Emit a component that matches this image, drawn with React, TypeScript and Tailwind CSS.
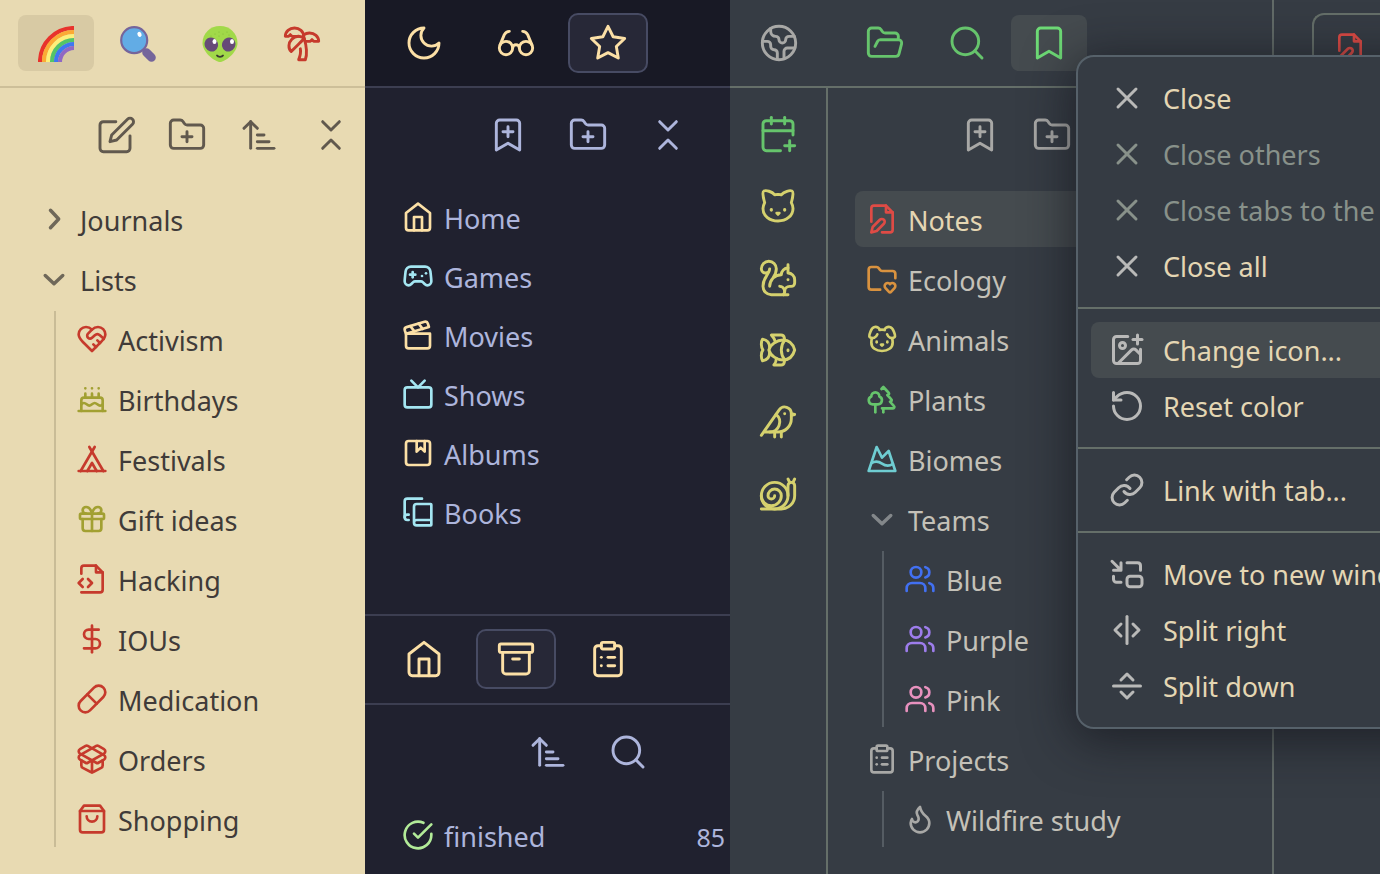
import type { ReactNode } from "react";
import {
  Album,
  Archive,
  ArrowUpNarrowWide,
  Bird,
  CalendarPlus,
  Cat,
  ChevronsDownUp,
  ClipboardList,
  DollarSign,
  Dog,
  Earth,
  Fish,
  FolderHeart,
  FolderOpen,
  FolderPlus,
  Gamepad2,
  Glasses,
  ImagePlus,
  Link,
  MountainSnow,
  PackageOpen,
  Pill,
  RotateCcw,
  SeparatorHorizontal,
  SeparatorVertical,
  Snail,
  Squirrel,
  Tent,
  TreePalm,
  Trees,
  Tv,
  X,
} from "lucide-react";

type IconProps = { className?: string; strokeWidth?: number };
type IconType = React.ComponentType<IconProps>;

function outline(children: ReactNode): IconType {
  return function OutlineIcon({ className, strokeWidth = 2 }: IconProps) {
    return (
      <svg
        viewBox="0 0 24 24"
        fill="none"
        stroke="currentColor"
        strokeWidth={strokeWidth}
        strokeLinecap="round"
        strokeLinejoin="round"
        aria-hidden="true"
        className={className}
      >
        {children}
      </svg>
    );
  };
}

const HeartShake = outline(
  <>
    <path d="M19 14c1.49-1.46 3-3.21 3-5.5A5.5 5.5 0 0 0 16.5 3c-1.76 0-3 .5-4.5 2-1.5-1.5-2.74-2-4.5-2A5.5 5.5 0 0 0 2 8.5c0 2.3 1.5 4.05 3 5.5l7 7Z" />
    <path d="M12 5 9.04 7.96a2.17 2.17 0 0 0 0 3.08c.82.82 2.13.85 3 .07l2.07-1.9a2.82 2.82 0 0 1 3.79 0l2.96 2.66" />
    <path d="m18 15-2-2" />
    <path d="m15 18-2-2" />
  </>,
);
const CakeIcon = outline(
  <>
    <path d="M20 21v-8a2 2 0 0 0-2-2H6a2 2 0 0 0-2 2v8" />
    <path d="M4 16s.5-1 2-1 2.500 2 4 2 2.500-2 4-2 2.500 2 4 2 2-1 2-1" />
    <path d="M2 21h20M7 8v3M12 8v3M17 8v3M7 4h.01M12 4h.01M17 4h.01" />
  </>,
);
const GiftIcon = outline(
  <>
    <rect x="3" y="8" width="18" height="4" rx="1" />
    <path d="M12 8v13" />
    <path d="M19 12v7a2 2 0 0 1-2 2H7a2 2 0 0 1-2-2v-7" />
    <path d="M7.500 8a2.500 2.500 0 0 1 0-5A4.800 8 0 0 1 12 8a4.800 8 0 0 1 4.500-5 2.500 2.500 0 0 1 0 5" />
  </>,
);
const FileCode = outline(
  <>
    <path d="M4 22h14a2 2 0 0 0 2-2V7l-5-5H6a2 2 0 0 0-2 2v4" />
    <path d="M15 2v5h5" />
    <path d="m5 12-3 3 3 3" />
    <path d="m9 18 3-3-3-3" />
  </>,
);
const FilePen = outline(
  <>
    <path d="M12 22h6a2 2 0 0 0 2-2V7l-5-5H6a2 2 0 0 0-2 2v10" />
    <path d="M15 2v5h5" />
    <path d="M10.400 12.600a2 2 0 1 1 3 3L8 21l-4 1 1-4Z" />
  </>,
);
const Bag = outline(
  <>
    <path d="M6 2 3 6v14a2 2 0 0 0 2 2h14a2 2 0 0 0 2-2V6l-3-4Z" />
    <path d="M3 6h18" />
    <path d="M16 10a4 4 0 0 1-8 0" />
  </>,
);
const EditIcon = outline(
  <>
    <path d="M12.500 4H5a2 2 0 0 0-2 2v14a2 2 0 0 0 2 2h14a2 2 0 0 0 2-2v-7.500" />
    <path d="M19.500 2.500a2.120 2.120 0 0 1 3 3L13 15l-4 1 1-4Z" />
  </>,
);
const Clapper = outline(
  <>
    <path d="M20.200 6 3 11l-.9-2.400c-.3-1.100.3-2.200 1.300-2.500l13.500-4c1.100-.3 2.200.3 2.500 1.300Z" />
    <path d="m6.200 5.300 3.100 3.900" />
    <path d="m12.400 3.400 3.100 4" />
    <path d="M3 11h18v9a2 2 0 0 1-2 2H5a2 2 0 0 1-2-2Z" />
  </>,
);
const MoonIcon = outline(<path d="M12 3a6 6 0 0 0 9 9 9 9 0 1 1-9-9Z" />);
const StarIcon = outline(
  <path d="M12 2l3.090 6.260L22 9.270l-5 4.870 1.180 6.880L12 17.770l-6.180 3.250L7 14.140 2 9.270l6.910-1.010z" />,
);
const BookmarkIcon = outline(<path d="m19 21-7-4-7 4V5a2 2 0 0 1 2-2h10a2 2 0 0 1 2 2v16z" />);
const BookmarkAdd = outline(
  <>
    <path d="m19 21-7-4-7 4V5a2 2 0 0 1 2-2h10a2 2 0 0 1 2 2v16z" />
    <path d="M12 7v6M15 10H9" />
  </>,
);
const House = outline(
  <>
    <path d="m3 9 9-7 9 7v11a2 2 0 0 1-2 2H5a2 2 0 0 1-2-2z" />
    <path d="M9 22V12h6v10" />
  </>,
);
const Books = outline(
  <>
    <path d="M2 16V4a2 2 0 0 1 2-2h11" />
    <path d="M22 18H11a2 2 0 1 0 0 4h10.500a.5.5 0 0 0 .5-.5v-15a.5.5 0 0 0-.5-.5H11a2 2 0 0 0-2 2v12" />
    <path d="M5 14H4a2 2 0 1 0 0 4h1" />
  </>,
);
const SearchIcon = outline(
  <>
    <circle cx="11" cy="11" r="8" />
    <path d="m21 21-4.300-4.300" />
  </>,
);
const Done = outline(
  <>
    <path d="M22 11.080V12a10 10 0 1 1-5.930-9.140" />
    <path d="m9 11 3 3L22 4" />
  </>,
);
const UsersIcon = outline(
  <>
    <path d="M16 21v-2a4 4 0 0 0-4-4H6a4 4 0 0 0-4 4v2" />
    <circle cx="9" cy="7" r="4" />
    <path d="M22 21v-2a4 4 0 0 0-3-3.870" />
    <path d="M16 3.130a4 4 0 0 1 0 7.750" />
  </>,
);
const FlameIcon = outline(
  <path d="M8.500 14.500A2.500 2.500 0 0 0 11 12c0-1.380-.5-2-1-3-1.072-2.143-.224-4.054 2-6 .5 2.500 2 4.900 4 6.500 2 1.600 3 3.500 3 5.500a7 7 0 1 1-14 0c0-1.153.433-2.294 1-3a2.500 2.500 0 0 0 2.500 2.500z" />,
);
const NewWindow = outline(
  <>
    <path d="M8 4.500v5H3m-1-6 6 6m13 0v-3c0-1.160-.84-2-2-2h-7m-9 9v2c0 1.050.95 2 2 2h3" />
    <rect x="12" y="13.500" width="10" height="7" ry="2" />
  </>,
);
const FoldOpen = outline(<path d="m4.500 9 7.500 7 7.500-7" />);
const FoldClosed = outline(<path d="m9 4.500 7 7.500-7 7.500" />);

function RainbowEmoji() {
  const bands = ["#e8332c", "#fbaa35", "#fdf07a", "#54c567", "#3f78f0", "#9068c4"];
  return (
    <svg viewBox="0 0 36 36" className="size-9" aria-hidden="true">
      {bands.map((color, i) => (
        <circle key={color} cx="36" cy="36" r={34 - i * 4} fill="none" stroke={color} strokeWidth="4.100" />
      ))}
    </svg>
  );
}

function LensEmoji() {
  return (
    <svg viewBox="0 0 36 36" className="size-9" aria-hidden="true">
      <path d="m24 24 3 3" stroke="#75659b" strokeWidth="4" />
      <path d="m26.500 26.500 5 5" stroke="#75659b" strokeWidth="8.600" strokeLinecap="round" />
      <circle cx="14.200" cy="14.200" r="13" fill="#62ace5" stroke="#75659b" strokeWidth="2.200" />
      <ellipse cx="19.500" cy="8.400" rx="2" ry="2.600" fill="#fff" transform="rotate(-25 19.500 8.400)" />
    </svg>
  );
}

function AlienEmoji() {
  return (
    <svg viewBox="0 0 36 36" className="size-9" aria-hidden="true">
      <path d="M35.500 17C35.500 26.500 23 36 18 36S.5 26.500.5 17C.5 7.500 8 0 18 0s17.500 7.500 17.500 17z" fill="#a1d949" />
      <g fill="#7fb83a">
        <circle cx="13" cy="8" r=".6" />
        <circle cx="17" cy="6" r=".6" />
        <circle cx="21" cy="8" r=".6" />
        <circle cx="25" cy="6" r=".6" />
        <circle cx="17" cy="10" r=".6" />
        <circle cx="27" cy="9" r=".6" />
        <circle cx="9" cy="10" r=".6" />
      </g>
      <ellipse cx="9.300" cy="18.500" rx="6.600" ry="7.200" fill="#664a78" transform="rotate(-30 9.300 18.500)" />
      <ellipse cx="26.700" cy="18.500" rx="6.600" ry="7.200" fill="#664a78" transform="rotate(30 26.700 18.500)" />
      <ellipse cx="12.500" cy="15.500" rx="2" ry="2.500" fill="#fff" />
      <ellipse cx="30" cy="15.500" rx="2" ry="2.500" fill="#fff" />
      <path d="M15 29.500c1 1.700 5 1.700 6 0" fill="none" stroke="#3a3a30" strokeWidth="1.800" strokeLinecap="round" />
    </svg>
  );
}

function ToolButton({ icon: Icon, label }: { icon: IconType; label: string }) {
  return (
    <button type="button" aria-label={label} className="flex size-10 items-center justify-center">
      <Icon className="size-10" strokeWidth={1.75} />
    </button>
  );
}

type RowProps = { icon: IconType; color: string; label: string; active?: boolean; fold?: boolean };

function Row({ icon: Icon, color, label, active, fold }: RowProps) {
  return (
    <a
      href="#"
      className={
        active
          ? "flex h-14 items-center gap-[10px] rounded-lg bg-[#454b4f] pl-[11px] text-[#e4d6b3]"
          : "flex h-14 items-center gap-[10px] rounded-lg pl-[11px]"
      }
    >
      <span className={`flex size-8 shrink-0 items-center justify-center ${color}`}>
        {fold ? <Icon className="size-7" strokeWidth={3} /> : <Icon className="size-8" strokeWidth={2} />}
      </span>
      <span className="whitespace-nowrap pt-1">{label}</span>
    </a>
  );
}

function Branch({ line, children }: { line: string; children: ReactNode }) {
  return <ul className={`ml-[27px] mt-1 flex flex-col gap-1 border-l-2 pl-[9px] ${line}`}>{children}</ul>;
}

const lists: RowProps[] = [
  { icon: HeartShake, color: "text-[#c63a2c]", label: "Activism" },
  { icon: CakeIcon, color: "text-[#a2a032]", label: "Birthdays" },
  { icon: Tent, color: "text-[#c63a2c]", label: "Festivals" },
  { icon: GiftIcon, color: "text-[#a2a032]", label: "Gift ideas" },
  { icon: FileCode, color: "text-[#c63a2c]", label: "Hacking" },
  { icon: DollarSign, color: "text-[#c63a2c]", label: "IOUs" },
  { icon: Pill, color: "text-[#c63a2c]", label: "Medication" },
  { icon: PackageOpen, color: "text-[#c63a2c]", label: "Orders" },
  { icon: Bag, color: "text-[#c63a2c]", label: "Shopping" },
];

function SandPanel() {
  return (
    <section className="min-w-0 bg-[#e8dab2] text-[#403b39]">
      <nav className="flex h-[88px] gap-[6px] border-b-2 border-[#cdbf99] pl-[18px] pt-[15px]">
        <button type="button" aria-label="Rainbow" className="flex h-14 w-[76px] items-center justify-center rounded-lg bg-[#d8caa4] pt-0.5">
          <RainbowEmoji />
        </button>
        <button type="button" aria-label="Search" className="flex h-14 w-[76px] items-center justify-center rounded-lg pt-0.5">
          <LensEmoji />
        </button>
        <button type="button" aria-label="Alien" className="flex h-14 w-[76px] items-center justify-center rounded-lg pt-0.5">
          <AlienEmoji />
        </button>
        <button type="button" aria-label="Palm" className="flex h-14 w-[76px] items-center justify-center rounded-lg text-[#c63a2c]">
          <TreePalm className="size-10" strokeWidth={1.75} />
        </button>
      </nav>
      <div className="flex justify-end gap-8 pr-[14px] pt-[27px] text-[#61594e]">
        <ToolButton icon={EditIcon} label="New note" />
        <ToolButton icon={FolderPlus} label="New folder" />
        <ToolButton icon={ArrowUpNarrowWide} label="Sort order" />
        <ToolButton icon={ChevronsDownUp} label="Collapse all" />
      </div>
      <ul className="flex flex-col gap-1 pl-[27px] pt-9">
        <li>
          <Row icon={FoldClosed} color="text-[#6f6859]" label="Journals" fold />
        </li>
        <li>
          <Row icon={FoldOpen} color="text-[#6f6859]" label="Lists" fold />
          <Branch line="border-[#c9bc97]">
            {lists.map((row) => (
              <li key={row.label}>
                <Row {...row} />
              </li>
            ))}
          </Branch>
        </li>
      </ul>
    </section>
  );
}

const bookmarks: RowProps[] = [
  { icon: House, color: "text-[#fce0a6]", label: "Home" },
  { icon: Gamepad2, color: "text-[#a4e6f2]", label: "Games" },
  { icon: Clapper, color: "text-[#fce0a6]", label: "Movies" },
  { icon: Tv, color: "text-[#a4e6f2]", label: "Shows" },
  { icon: Album, color: "text-[#fce0a6]", label: "Albums" },
  { icon: Books, color: "text-[#a4e6f2]", label: "Books" },
];

function NightTab({ icon: Icon, label, active }: { icon: IconType; label: string; active?: boolean }) {
  return (
    <button
      type="button"
      aria-label={label}
      className={
        active
          ? "flex h-[60px] w-20 items-center justify-center rounded-[10px] border-2 border-[#474b63] bg-[#272837]"
          : "flex h-[60px] w-20 items-center justify-center"
      }
    >
      <Icon className="size-10" strokeWidth={1.75} />
    </button>
  );
}

function NightPanel() {
  return (
    <section className="min-w-0 bg-[#20212f] text-[#adb5dc]">
      <nav className="flex h-[88px] gap-3 border-b-2 border-[#3c3e51] bg-[#181925] pl-[19px] pt-[13px] text-[#fce0a6]">
        <NightTab icon={MoonIcon} label="Night" />
        <NightTab icon={Glasses} label="Reading" />
        <NightTab icon={StarIcon} label="Starred" active />
      </nav>
      <div className="flex justify-end gap-10 pr-[42px] pt-[27px]">
        <ToolButton icon={BookmarkAdd} label="Add bookmark" />
        <ToolButton icon={FolderPlus} label="New group" />
        <ToolButton icon={ChevronsDownUp} label="Collapse all" />
      </div>
      <ul className="flex flex-col gap-[3px] pb-[74px] pl-[26px] pt-[34px]">
        {bookmarks.map((row) => (
          <li key={row.label}>
            <Row {...row} />
          </li>
        ))}
      </ul>
      <nav className="flex h-[91px] gap-3 border-y-2 border-[#3c3e51] pl-[19px] pt-[13px] text-[#fce0a6]">
        <NightTab icon={House} label="Home" />
        <NightTab icon={Archive} label="Archive" active />
        <NightTab icon={ClipboardList} label="Tasks" />
      </nav>
      <div className="flex justify-end gap-10 pr-[82px] pt-[27px]">
        <ToolButton icon={ArrowUpNarrowWide} label="Sort order" />
        <ToolButton icon={SearchIcon} label="Search" />
      </div>
      <div className="flex items-center justify-between pl-[26px] pr-[5px] pt-[35px]">
        <Row icon={Done} color="text-[#b2eb98]" label="finished" />
        <span className="pt-1 text-[25px]">85</span>
      </div>
    </section>
  );
}

const notes: RowProps[] = [
  { icon: FilePen, color: "text-[#df4b45]", label: "Notes", active: true },
  { icon: FolderHeart, color: "text-[#d9923f]", label: "Ecology" },
  { icon: Dog, color: "text-[#d5d16e]", label: "Animals" },
  { icon: Trees, color: "text-[#66c46c]", label: "Plants" },
  { icon: MountainSnow, color: "text-[#6fcdd2]", label: "Biomes" },
];

const teams: RowProps[] = [
  { icon: UsersIcon, color: "text-[#4270f2]", label: "Blue" },
  { icon: UsersIcon, color: "text-[#9d7dec]", label: "Purple" },
  { icon: UsersIcon, color: "text-[#e891be]", label: "Pink" },
];

function SlateTab({ icon: Icon, label, active }: { icon: IconType; label: string; active?: boolean }) {
  return (
    <button
      type="button"
      aria-label={label}
      className={
        active
          ? "flex h-14 w-[76px] items-center justify-center rounded-lg bg-[#454b4f] text-[#6edb76]"
          : "flex h-14 w-[76px] items-center justify-center rounded-lg text-[#66c46c]"
      }
    >
      <Icon className="size-10" strokeWidth={1.75} />
    </button>
  );
}

type MenuItem = { icon: IconType; label: string; disabled?: boolean; active?: boolean };

const menu: MenuItem[][] = [
  [
    { icon: X, label: "Close" },
    { icon: X, label: "Close others", disabled: true },
    { icon: X, label: "Close tabs to the right", disabled: true },
    { icon: X, label: "Close all" },
  ],
  [
    { icon: ImagePlus, label: "Change icon...", active: true },
    { icon: RotateCcw, label: "Reset color" },
  ],
  [{ icon: Link, label: "Link with tab..." }],
  [
    { icon: NewWindow, label: "Move to new window" },
    { icon: SeparatorVertical, label: "Split right" },
    { icon: SeparatorHorizontal, label: "Split down" },
  ],
];

function ContextMenu() {
  return (
    <div
      role="menu"
      className="absolute left-[346px] top-[55px] w-[400px] divide-y-2 divide-[#656f69] rounded-[18px] border-2 border-[#56616a] bg-[#353b43] shadow-[0_8px_48px_4px_rgba(18,20,26,0.65)]"
    >
      {menu.map((group) => (
        <div key={group[0].label} className="p-[13px]">
          {group.map(({ icon: Icon, label, disabled, active }) => (
            <button
              key={label}
              type="button"
              role="menuitem"
              disabled={disabled}
              className={`flex h-14 w-full items-center gap-[18px] rounded-lg pl-[18px] text-left ${
                active ? "bg-[#454b4f] text-[#e4d6b3]" : disabled ? "text-[#88918a]" : "text-[#e4d6b3]"
              }`}
            >
              <span className={disabled ? "text-[#88918a]" : "text-[#b9b9b8]"}>
                <Icon className="size-9" strokeWidth={2} />
              </span>
              <span className="whitespace-nowrap pt-0.5">{label}</span>
            </button>
          ))}
        </div>
      ))}
    </div>
  );
}

function SlatePanel() {
  return (
    <section className="relative flex min-w-0 bg-[#363c44] text-[#c4c1b8]">
      <div className="flex w-[544px] shrink-0 flex-col border-r-2 border-[#626b68]">
        <nav className="flex h-[88px] gap-[6px] border-b-2 border-[#656f69] pt-[15px]">
          <button type="button" aria-label="World" className="mr-[13px] flex h-14 w-[98px] items-center justify-center text-[#a8a8a6]">
            <Earth className="size-10" strokeWidth={1.75} />
          </button>
          <SlateTab icon={FolderOpen} label="Files" />
          <SlateTab icon={SearchIcon} label="Search" />
          <SlateTab icon={BookmarkIcon} label="Bookmarks" active />
        </nav>
        <div className="flex grow">
          <nav className="flex w-[98px] shrink-0 flex-col items-center gap-8 border-r-2 border-[#656f69] pt-[26px] text-[#d5d16e]">
            <div className="text-[#66c46c]">
              <ToolButton icon={CalendarPlus} label="New day" />
            </div>
            <ToolButton icon={Cat} label="Cat" />
            <ToolButton icon={Squirrel} label="Squirrel" />
            <ToolButton icon={Fish} label="Fish" />
            <ToolButton icon={Bird} label="Bird" />
            <ToolButton icon={Snail} label="Snail" />
          </nav>
          <div className="min-w-0 grow">
            <div className="flex gap-8 pl-[132px] pt-[27px] text-[#a8a8a6]">
              <ToolButton icon={BookmarkAdd} label="Add bookmark" />
              <ToolButton icon={FolderPlus} label="New group" />
            </div>
            <ul className="flex flex-col gap-1 px-[27px] pt-9">
              {notes.map((row) => (
                <li key={row.label}>
                  <Row {...row} />
                </li>
              ))}
              <li>
                <Row icon={FoldOpen} color="text-[#83878a]" label="Teams" fold />
                <Branch line="border-[#555c63]">
                  {teams.map((row) => (
                    <li key={row.label}>
                      <Row {...row} />
                    </li>
                  ))}
                </Branch>
              </li>
              <li>
                <Row icon={ClipboardList} color="text-[#a8a8a6]" label="Projects" />
                <Branch line="border-[#555c63]">
                  <li>
                    <Row icon={FlameIcon} color="text-[#a8a8a6]" label="Wildfire study" />
                  </li>
                </Branch>
              </li>
            </ul>
          </div>
        </div>
      </div>
      <div className="min-w-0 grow">
        <div className="h-[88px] border-b-2 border-[#656f69] pl-[38px] pt-[13px]">
          <button
            type="button"
            aria-label="Notes tab"
            className="flex h-[73px] w-full items-center rounded-tl-xl border-l-2 border-t-2 border-[#656f69] pb-1.5 pl-5 text-[#df4b45]"
          >
            <FilePen className="size-8" strokeWidth={2} />
          </button>
        </div>
      </div>
      <ContextMenu />
    </section>
  );
}

export default function App() {
  return (
    <main className="grid min-h-screen grid-cols-[365fr_365fr_650fr] overflow-hidden font-['Noto_Sans',sans-serif] text-[27px] leading-9">
      <SandPanel />
      <NightPanel />
      <SlatePanel />
    </main>
  );
}
